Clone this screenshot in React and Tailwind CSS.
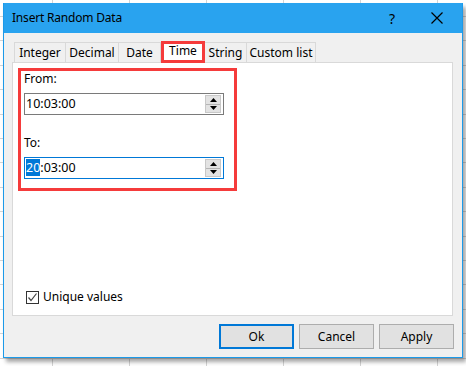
import React from "react";

const font = { fontFamily: '"Noto Sans", "Open Sans", sans-serif' };

const tabs = [
  { label: "Integer", w: "w-[52px]" },
  { label: "Decimal", w: "w-[53px]" },
  { label: "Date", w: "w-[42px]" },
  { label: "Time", w: "w-[44px]", active: true },
  { label: "String", w: "w-[42px]" },
  { label: "Custom list", w: "w-[69px]" },
];

const Spinner = () => (
  <div className="w-[16px] h-[18px] mr-[2px] flex flex-col border border-[#c8c8c8] bg-[#e3e3e3]">
    <div className="flex-1 flex items-center justify-center border-b border-[#b5b5b5]">
      <svg width="7" height="4" viewBox="0 0 7 4">
        <polygon points="3.5,0 7,4 0,4" fill="#000" />
      </svg>
    </div>
    <div className="flex-1 flex items-center justify-center">
      <svg width="7" height="4" viewBox="0 0 7 4">
        <polygon points="0,0 7,0 3.5,4" fill="#000" />
      </svg>
    </div>
  </div>
);

const TimeField = ({ focused, children }) => (
  <div
    className={`w-[200px] h-[22px] flex items-center bg-white border ${
      focused ? "border-[#0078d7]" : "border-[#7a7a7a]"
    }`}
  >
    <div className="flex-1 pl-[1px] text-[12.5px] leading-[18px] text-black">{children}</div>
    <Spinner />
  </div>
);

const Button = ({ children, primary }) => (
  <button
    className={`w-[75px] h-[25px] text-[12px] text-black bg-[#e1e1e1] ${
      primary ? "border-2 border-[#0078d7]" : "border border-[#adadad]"
    }`}
    style={font}
  >
    {children}
  </button>
);

export default function App() {
  return (
    <div
      className="w-[466px] h-[366px] overflow-hidden bg-white pl-[3px] pt-[3px] [background-image:repeating-linear-gradient(90deg,transparent_0_52px,#d4d4d4_52px_53px,transparent_53px_77px),repeating-linear-gradient(180deg,transparent_0_16px,#d4d4d4_16px_17px,transparent_17px_24.4px)]"
      style={font}
    >
      {/* Dialog window */}
      <div className="w-[460px] h-[355px] flex flex-col bg-[#f0f0f0] border-x border-b border-[#1c9ae9] shadow-[3px_4px_4px_rgba(0,0,0,0.35)]">
        {/* Title bar */}
        <div className="h-[30px] bg-[#29a3ef] flex items-center pl-[8px] pr-[19px] text-[12px] tracking-[-0.2px] text-black">
          <span>Insert Random Data</span>
          <span className="ml-auto mr-[36px] text-[14px]">?</span>
          <svg width="12" height="12" viewBox="0 0 12 12">
            <path d="M0.5 0.5 L11.5 11.5 M11.5 0.5 L0.5 11.5" stroke="#000" strokeWidth="1.2" />
          </svg>
        </div>

        <div className="flex-1 flex flex-col px-[8px] pt-[7px]">
          {/* Tabs */}
          <div className="flex items-end h-[22px] ml-[2px]">
            {tabs.map((t) =>
              t.active ? (
                <div
                  key={t.label}
                  className={`${t.w} h-[22px] relative z-10 -mb-[1px] bg-white border-[3px] border-[#f53b3b] flex items-center justify-center text-[12px] leading-none pb-[2px] whitespace-nowrap`}
                >
                  {t.label}
                </div>
              ) : (
                <div
                  key={t.label}
                  className={`${t.w} h-[20px] border-t border-r border-[#d9d9d9] first:border-l flex items-center justify-center text-[12px] leading-none whitespace-nowrap`}
                >
                  {t.label}
                </div>
              )
            )}
          </div>

          {/* Tab panel */}
          <div className="w-[441px] h-[254px] bg-white border border-[#d9d9d9] flex flex-col pl-[5px] pt-[5px] pb-[9px]">
            <div className="w-[219px] h-[123px] border-[3px] border-[#f53b3b] flex flex-col pl-[3px] text-[12px] text-black">
              <div className="h-[16px] leading-[16px]">From:</div>
              <div className="mt-[6px]">
                <TimeField>10:03:00</TimeField>
              </div>
              <div className="mt-[20px] h-[16px] leading-[16px]">To:</div>
              <div className="mt-[6px]">
                <TimeField focused>
                  <span className="bg-[#0078d7] text-white">20</span>:03:00
                </TimeField>
              </div>
            </div>

            <div className="mt-auto flex items-center pl-[8px] text-[12px] text-black">
              <div className="w-[13px] h-[13px] border border-[#333] bg-white flex items-center justify-center">
                <svg width="11" height="11" viewBox="0 0 11 11">
                  <path d="M1.5 5.5 L4 8.5 L9.5 1.5" fill="none" stroke="#444" strokeWidth="1.2" />
                </svg>
              </div>
              <span className="ml-[4px]">Unique values</span>
            </div>
          </div>

          {/* Buttons */}
          <div className="flex justify-end gap-[5px] mt-[8px]">
            <Button primary>Ok</Button>
            <Button>Cancel</Button>
            <Button>Apply</Button>
          </div>
        </div>
      </div>
    </div>
  );
}
